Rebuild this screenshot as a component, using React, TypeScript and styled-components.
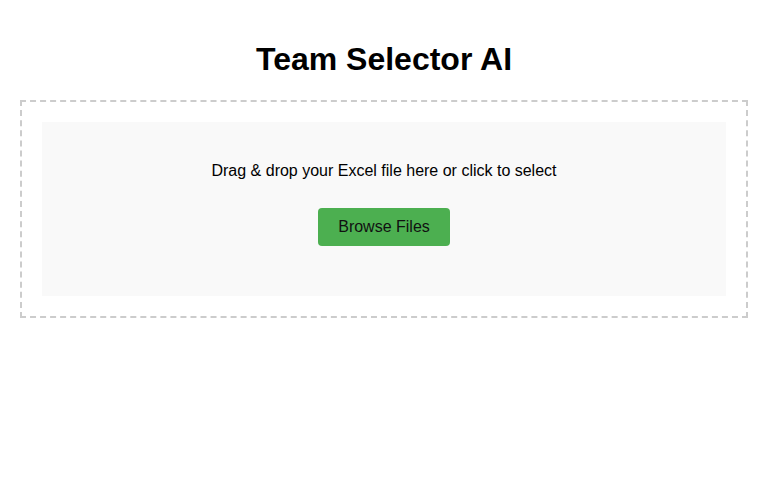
import styled, { createGlobalStyle } from "styled-components";

const GlobalStyle = createGlobalStyle`
    body {
        margin: 0;
        background: #ffffff;
        font-family: "Liberation Sans", Arial, sans-serif;
        color: #000;
    }
`;

export default function App() {
    return (
        <Page>
            <GlobalStyle />
            <Title>Team Selector AI</Title>
            <DropZone>
                <DropArea>
                    <Hint>Drag &amp; drop your Excel file here or click to select</Hint>
                    <BrowseButton type="button">Browse Files</BrowseButton>
                </DropArea>
            </DropZone>
        </Page>
    )
}

const Page = styled.div`
    padding: 20px;
`;

const Title = styled.h1`
    font-size: 32px;
    font-weight: 700;
    line-height: 37px;
    text-align: center;
    margin: 21px 0 22px;
`;

const DropZone = styled.div`
    border: 2px dashed #cccccc;
    padding: 20px;
`;

const DropArea = styled.div`
    background-color: #f9f9f9;
    padding: 40px 20px 50px;
    display: flex;
    flex-direction: column;
    align-items: center;
`;

const Hint = styled.p`
    margin: 0;
    font-size: 16px;
    line-height: 18px;
`;

const BrowseButton = styled.button`
    margin-top: 28px;
    background-color: #4caf50;
    color: #111;
    border: none;
    border-radius: 4px;
    padding: 10px 20px;
    font-family: "Liberation Sans", Arial, sans-serif;
    font-size: 16px;
    line-height: 18px;
    cursor: pointer;
`;
